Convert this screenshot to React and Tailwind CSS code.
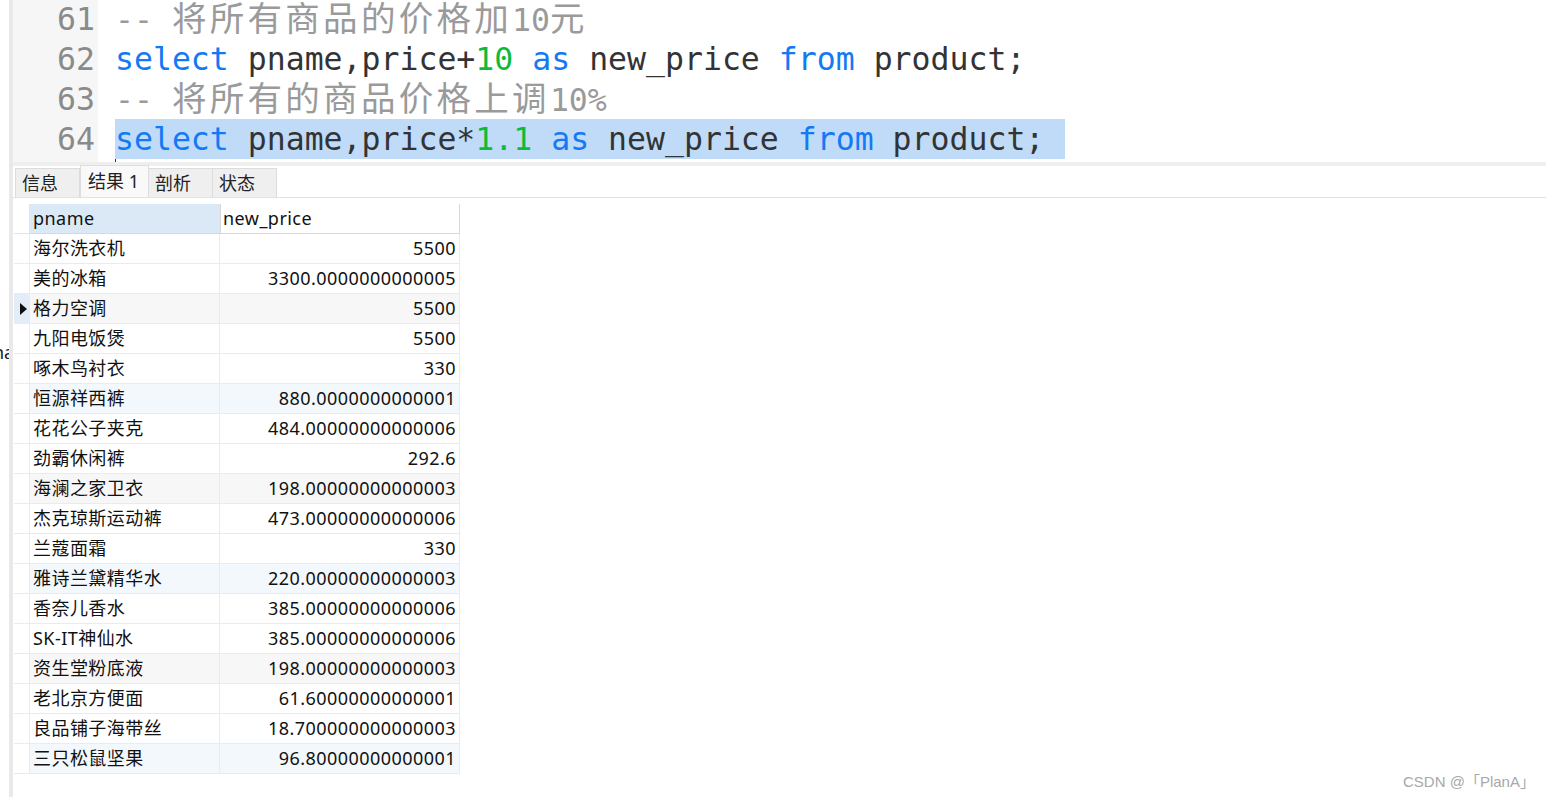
import React from "react";

const mono = "font-['DejaVu_Sans_Mono','Noto_Sans_CJK_SC',monospace]";
const ui = "font-['Noto_Sans','Noto_Sans_CJK_SC',sans-serif]";

// each segment: [text, kind]
const codeLines = [
  {
    no: 61,
    parts: [
      ["-- ", "c"],
      ["将所有商品的价格加", "cjk"],
      ["10", "c"],
      ["元", "cjk"],
    ],
  },
  {
    no: 62,
    parts: [
      ["select", "k"],
      [" pname,price+", "t"],
      ["10", "n"],
      [" ", "t"],
      ["as", "k"],
      [" new_price ", "t"],
      ["from", "k"],
      [" product;", "t"],
    ],
  },
  {
    no: 63,
    parts: [
      ["-- ", "c"],
      ["将所有的商品价格上调", "cjk"],
      ["10%", "c"],
    ],
  },
  {
    no: 64,
    selected: true,
    parts: [
      ["select", "k"],
      [" pname,price*", "t"],
      ["1.1", "n"],
      [" ", "t"],
      ["as", "k"],
      [" new_price ", "t"],
      ["from", "k"],
      [" product;", "t"],
    ],
  },
];

const partClass = {
  k: "text-[#1479f5]",
  t: "text-[#333333]",
  n: "text-[#0dbb3a]",
  c: "text-[#9a9a9a]",
  cjk: "text-[#9a9a9a] text-[34.5px] tracking-[3.3px]",
};

const rows = [
  ["海尔洗衣机", "5500"],
  ["美的冰箱", "3300.0000000000005"],
  ["格力空调", "5500"],
  ["九阳电饭煲", "5500"],
  ["啄木鸟衬衣", "330"],
  ["恒源祥西裤", "880.0000000000001"],
  ["花花公子夹克", "484.00000000000006"],
  ["劲霸休闲裤", "292.6"],
  ["海澜之家卫衣", "198.00000000000003"],
  ["杰克琼斯运动裤", "473.00000000000006"],
  ["兰蔻面霜", "330"],
  ["雅诗兰黛精华水", "220.00000000000003"],
  ["香奈儿香水", "385.00000000000006"],
  ["SK-IT神仙水", "385.00000000000006"],
  ["资生堂粉底液", "198.00000000000003"],
  ["老北京方便面", "61.60000000000001"],
  ["良品铺子海带丝", "18.700000000000003"],
  ["三只松鼠坚果", "96.80000000000001"],
];

const tabs = ["信息", "结果 1", "剖析", "状态"];

function rowBg(i) {
  if (i % 6 === 2) return "bg-[#f7f7f7]";
  if (i % 6 === 5) return "bg-[#f3f8fc]";
  return "bg-white";
}

export default function App() {
  return (
    <div className="relative w-[1546px] h-[797px] overflow-hidden bg-white flex">
      {/* clipped panel on the far left */}
      <div className={`w-[9px] overflow-hidden pt-[339px] ${ui} text-[18px] text-[#222]`}>
        <span className="block -ml-[7px] whitespace-nowrap">na</span>
      </div>
      <div className="w-[4px] bg-[#e9e9e9]" />

      <div className="flex-1 flex flex-col">
        {/* Editor */}
        <div className="h-[162px] flex overflow-hidden">
          <div className={`w-[85px] bg-[#f6f6f6] -mt-[1px] ${mono} text-[31.5px] leading-[40px] text-[#8a8a8a] text-right pr-[3px]`}>
            {codeLines.map((l) => (
              <div key={l.no}>{l.no}</div>
            ))}
          </div>
          <div className={`flex-1 pl-[17px] -mt-[1px] ${mono} text-[31.5px] leading-[40px]`}>
            {codeLines.map((l) => (
              <div
                key={l.no}
                className={`h-[40px] whitespace-pre ${l.selected ? "w-[950px] bg-[#bfdbf7]" : ""}`}
              >
                {l.parts.map(([text, kind], i) => (
                  <span key={i} className={partClass[kind]}>
                    {text}
                  </span>
                ))}
              </div>
            ))}
            <div className="w-[1px] h-[3px] bg-[#333]" />
          </div>
        </div>

        <div className="h-[4px] bg-[#efefef]" />

        {/* Tabs */}
        <div className={`h-[32px] flex items-end pl-[2px] border-b border-[#e2e2e2] ${ui} text-[18px] text-[#222]`}>
          {tabs.map((t, i) =>
            i === 1 ? (
              <div
                key={t}
                className="w-[69px] h-[32px] bg-[#f9f9f9] border border-b-0 border-[#dedede] pl-[7px] leading-[30px]"
              >
                {t}
              </div>
            ) : (
              <div
                key={t}
                className={`h-[29px] bg-[#efefef] border-t border-r border-[#dcdcdc] pl-[6px] leading-[29px] ${
                  i === 0 ? "w-[65px] border-l" : "w-[64px]"
                }`}
              >
                {t}
              </div>
            )
          )}
        </div>

        {/* Result grid */}
        <div className={`mt-[6px] ml-[1px] ${ui} text-[18px] tracking-[0.45px] text-[#111]`}>
          <div className="grid grid-cols-[16px_190px_240px] w-[446px]">
            <div className="h-[30px] bg-white border-r border-b border-[#e4e4e4]" />
            <div className="h-[30px] bg-[#dbe9f7] border-b border-[#d8d8d8] pl-[3px] leading-[29px]">
              pname
            </div>
            <div className="h-[30px] bg-white border-b border-r border-l border-[#d8d8d8] pl-[2px] leading-[29px]">
              new_price
            </div>

            {rows.map(([name, price], i) => (
              <React.Fragment key={name}>
                <div
                  className={`h-[30px] border-r border-b border-[#ebebeb] flex items-center pl-[6px] ${
                    i === 2 ? "bg-[#e3edf8]" : "bg-white"
                  }`}
                >
                  {i === 2 && (
                    <svg width="7" height="12" viewBox="0 0 7 12">
                      <polygon points="0,0 7,6 0,12" fill="#111" />
                    </svg>
                  )}
                </div>
                <div className={`h-[30px] ${rowBg(i)} border-b border-r border-[#ebebeb] pl-[3px] leading-[28px] whitespace-nowrap`}>
                  {name}
                </div>
                <div className={`h-[30px] ${rowBg(i)} border-b border-r border-[#ebebeb] pr-[3px] leading-[28px] text-right whitespace-nowrap`}>
                  {price}
                </div>
              </React.Fragment>
            ))}
          </div>
        </div>
      </div>

      <div className="absolute left-[1403px] top-[771px] font-['Liberation_Sans','Noto_Sans_CJK_SC',sans-serif] text-[15px] text-[#a8a8a8] whitespace-nowrap">
        CSDN @「PlanA」
      </div>
    </div>
  );
}
